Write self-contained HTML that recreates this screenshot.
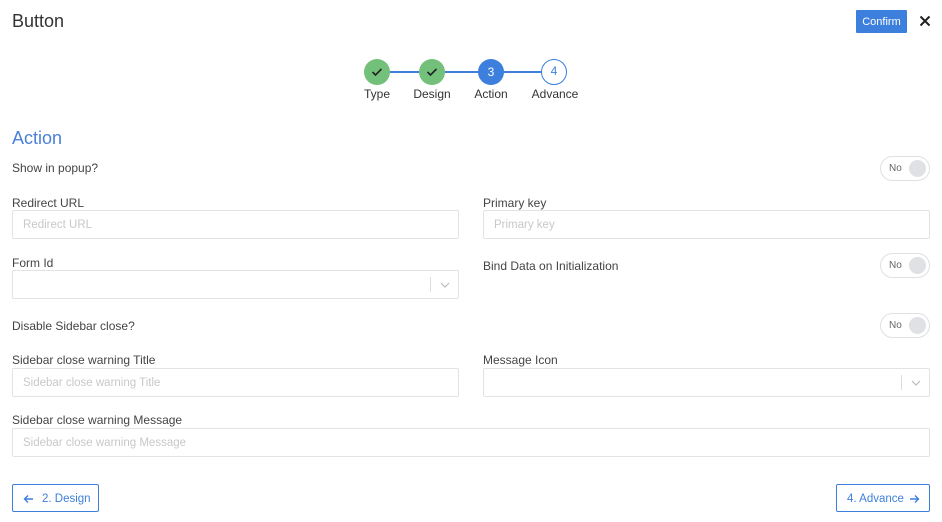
<!DOCTYPE html>
<html><head><meta charset="utf-8"><style>
*{box-sizing:border-box;margin:0;padding:0}
body{width:942px;height:522px;background:#fff;font-family:"Liberation Sans",sans-serif;color:#444;position:relative;overflow:hidden}
.a{position:absolute}
.lbl{position:absolute;font-size:12px;color:#444;white-space:nowrap}
.inp{position:absolute;border:1px solid #e3e3e3;border-radius:2px;height:29px;font-size:11.5px;color:#c8c8c8;padding:0 10px;line-height:28px;white-space:nowrap}
.tg{position:absolute;width:50px;height:25px;border:1px solid #e0e0e0;border-radius:13px;font-size:10px;color:#666}
.tg span{position:absolute;left:8px;top:6px}
.tg i{position:absolute;right:3px;top:3px;width:17px;height:17px;border-radius:50%;background:#dfe1e5}
.sel:after{content:"";position:absolute;right:27px;top:6px;width:1px;height:15px;background:#ddd}
.sel svg{position:absolute;right:8px;top:11px}
.c{position:absolute;width:26px;height:26px;border-radius:50%;top:59px;text-align:center;line-height:26px;font-size:12px}
.st{position:absolute;top:87px;font-size:12px;color:#333;transform:translateX(-50%);white-space:nowrap}
.btn{position:absolute;border:1px solid #3d7fdc;color:#3d7fdc;font-size:11.5px;height:28px;line-height:27px;border-radius:2px}
</style></head><body>
<div class="a" style="left:12px;top:11px;font-size:18px;color:#333">Button</div>
<div class="a" style="left:856px;top:10px;width:51px;height:23px;background:#3d7fdc;color:#fff;font-size:11px;display:flex;align-items:center;justify-content:center;border-radius:1px">Confirm</div>
<svg class="a" style="left:919px;top:15px" width="12" height="12"><path d="M1.5 1.5L10.5 10.5M10.5 1.5L1.5 10.5" stroke="#222" stroke-width="2"/></svg>

<div class="a" style="left:388px;top:71px;width:154px;height:2px;background:#3d7fdc"></div>
<div class="c" style="left:364px;background:#73c07a"><svg width="12" height="10" style="margin-top:8px"><path d="M1.5 5L4.5 8L10.5 2" stroke="#222" stroke-width="1.6" fill="none"/></svg></div>
<div class="c" style="left:419px;background:#73c07a"><svg width="12" height="10" style="margin-top:8px"><path d="M1.5 5L4.5 8L10.5 2" stroke="#222" stroke-width="1.6" fill="none"/></svg></div>
<div class="c" style="left:478px;background:#3d7fdc;color:#fff">3</div>
<div class="c" style="left:541px;background:#fff;border:1.5px solid #3d7fdc;color:#3d7fdc;line-height:23px">4</div>
<div class="st" style="left:377px">Type</div>
<div class="st" style="left:432px">Design</div>
<div class="st" style="left:491px">Action</div>
<div class="st" style="left:555px">Advance</div>

<div class="a" style="left:12px;top:128px;font-size:18px;color:#4a80d8">Action</div>
<div class="lbl" style="left:12px;top:161px">Show in popup?</div>
<div class="tg" style="left:880px;top:156px"><span>No</span><i></i></div>

<div class="lbl" style="left:12px;top:196px">Redirect URL</div>
<div class="inp" style="left:12px;top:210px;width:447px">Redirect URL</div>
<div class="lbl" style="left:483px;top:196px">Primary key</div>
<div class="inp" style="left:483px;top:210px;width:447px">Primary key</div>

<div class="lbl" style="left:12px;top:256px">Form Id</div>
<div class="inp sel" style="left:12px;top:270px;width:447px"><svg width="10" height="6"><path d="M1 1L5 5L9 1" stroke="#bbb" stroke-width="1.2" fill="none"/></svg></div>
<div class="lbl" style="left:483px;top:259px">Bind Data on Initialization</div>
<div class="tg" style="left:880px;top:253px"><span>No</span><i></i></div>

<div class="lbl" style="left:12px;top:319px">Disable Sidebar close?</div>
<div class="tg" style="left:880px;top:313px"><span>No</span><i></i></div>

<div class="lbl" style="left:12px;top:353px">Sidebar close warning Title</div>
<div class="inp" style="left:12px;top:368px;width:447px">Sidebar close warning Title</div>
<div class="lbl" style="left:483px;top:353px">Message Icon</div>
<div class="inp sel" style="left:483px;top:368px;width:447px"><svg width="10" height="6"><path d="M1 1L5 5L9 1" stroke="#bbb" stroke-width="1.2" fill="none"/></svg></div>

<div class="lbl" style="left:12px;top:413px">Sidebar close warning Message</div>
<div class="inp" style="left:12px;top:428px;width:918px">Sidebar close warning Message</div>

<div class="btn" style="left:12px;top:484px;width:87px"><svg class="a" style="left:10px;top:9px" width="11" height="10"><path d="M10 5H1.5M5 1.5L1.5 5L5 8.5" stroke="#3d7fdc" stroke-width="1.4" fill="none"/></svg><span class="a" style="left:29px;top:1px">2. Design</span></div>
<div class="btn" style="left:836px;top:484px;width:94px"><span class="a" style="left:10px;top:1px">4. Advance</span><svg class="a" style="left:72px;top:9px" width="11" height="10"><path d="M1 5H9.5M6 1.5L9.5 5L6 8.5" stroke="#3d7fdc" stroke-width="1.4" fill="none"/></svg></div>
</body></html>
